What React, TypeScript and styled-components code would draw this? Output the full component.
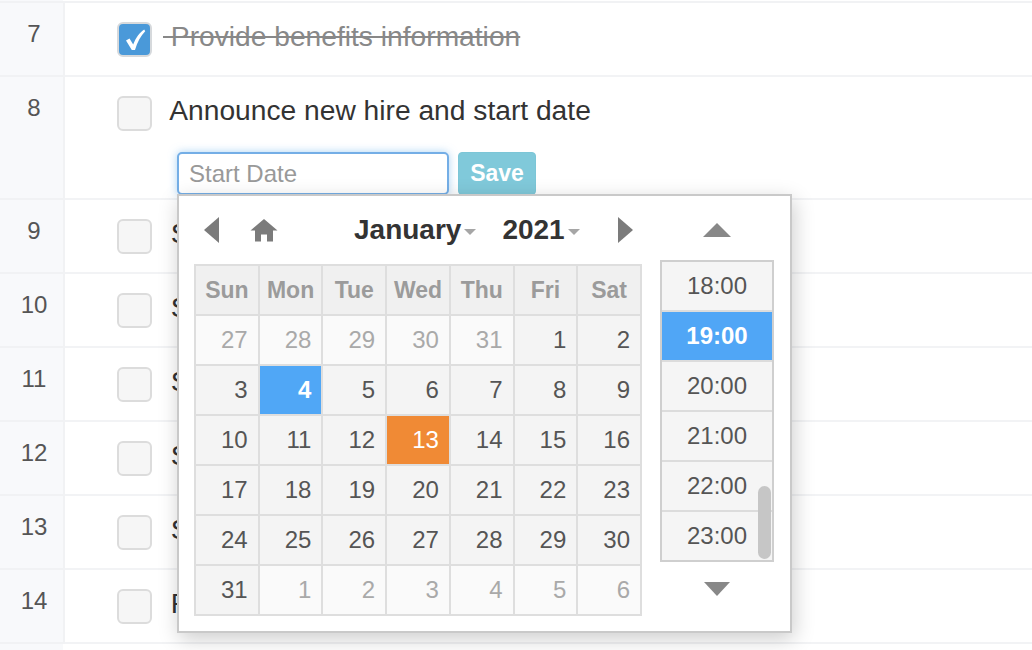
import React from 'react';
import styled, { createGlobalStyle, css } from 'styled-components';

const GlobalStyle = createGlobalStyle`
  html, body { margin: 0; padding: 0; background: #fff; }
  body { font-family: "Liberation Sans", Arial, Helvetica, sans-serif; overflow: hidden; }
  * { box-sizing: border-box; }
`;

const Page = styled.div`
  width: 1032px;
  height: 650px;
  overflow: hidden;
  padding-top: 1px;
  background: linear-gradient(to right, #f8f9fb 0, #f8f9fb 63px, #fff 63px);
`;

const Table = styled.div`
  display: flex;
  flex-direction: column;
  border-top: 2px solid #f1f2f4;
`;

const Row = styled.div`
  display: flex;
`;

const NumCell = styled.div`
  width: 65px;
  flex: none;
  background: #f8f9fb;
  border-right: 2px solid #f1f2f4;
  border-bottom: 2px solid #f1f2f4;
  padding: 14px 0 0 5px;
  text-align: center;
  font-size: 24px;
  line-height: 34px;
  color: #555;
`;

const ContentCell = styled.div<{ $pb: number }>`
  flex: 1;
  background: #fff;
  border-bottom: 2px solid #f2f3f5;
  padding: 16px 0 ${(p) => p.$pb}px 52px;
  display: flex;
  flex-direction: column;
`;

const TaskLine = styled.div`
  display: flex;
  align-items: flex-start;
`;

const Checkbox = styled.div<{ $checked?: boolean }>`
  width: 35px;
  height: 35px;
  flex: none;
  margin-top: 3px;
  border-radius: 6px;
  border: 2px solid #dcdcdc;
  background: #f6f6f6;
  display: flex;
  align-items: center;
  justify-content: center;
  ${(p) =>
    p.$checked &&
    css`
      background: #4a99d9;
      border-color: #d6d9dc;
    `}
`;

const Label = styled.span<{ $done?: boolean }>`
  margin-left: 11px;
  font-size: 28.2px;
  line-height: 34px;
  color: #333;
  white-space: pre;
  ${(p) =>
    p.$done &&
    css`
      color: #888;
      text-decoration: line-through;
    `}
`;

const DateEditor = styled.div`
  position: relative;
  display: flex;
  gap: 9px;
  margin: 21px 0 0 60px;
`;

const DateInput = styled.input`
  width: 272px;
  height: 43px;
  border: 2px solid #74aee6;
  border-radius: 5px;
  box-shadow: 0 0 8px rgba(102, 175, 233, 0.55);
  padding: 0 10px;
  font-family: inherit;
  font-size: 24px;
  color: #555;
  outline: none;
  background: #fff;
  &::placeholder { color: #999; }
`;

const SaveButton = styled.button`
  width: 78px;
  height: 43px;
  border: 1px solid #7cc6d7;
  border-radius: 4px;
  background: #80c9da;
  color: #fff;
  font-family: inherit;
  font-weight: bold;
  font-size: 23px;
  padding: 0;
`;

const Popup = styled.div`
  position: absolute;
  left: 0;
  top: 42px;
  width: 615px;
  z-index: 10;
  background: #fff;
  border: 2px solid #c9c9c9;
  box-shadow: 2px 6px 20px rgba(0, 0, 0, 0.2);
  padding: 10px 16px 15px 15px;
  display: flex;
  gap: 18px;
`;

const CalColumn = styled.div`
  width: 448px;
  display: flex;
  flex-direction: column;
  gap: 10px;
`;

const CalHeader = styled.div`
  height: 48px;
  display: flex;
  align-items: center;
`;

const NavIcon = styled.svg<{ $ml: number; $auto?: boolean }>`
  flex: none;
  display: block;
  margin-left: ${(p) => (p.$auto ? 'auto' : `${p.$ml}px`)};
  ${(p) => p.$auto && css`margin-right: 9px;`}
`;

const Select = styled.div<{ $ml: number }>`
  margin-left: ${(p) => p.$ml}px;
  display: flex;
  align-items: center;
  gap: 3px;
  font-weight: bold;
  font-size: 28px;
  color: #333;
`;

const Caret = styled.svg`
  display: block;
  margin-top: 4px;
`;

const Grid = styled.div`
  display: grid;
  grid-template-columns: repeat(7, 1fr);
  grid-auto-rows: 48px;
  gap: 2px;
  padding: 2px;
  background: #dedede;
`;

const HeadCell = styled.div`
  background: #f0f0f0;
  color: #9b9b9b;
  font-weight: bold;
  font-size: 23px;
  display: flex;
  align-items: center;
  justify-content: center;
`;

type DayKind = 'other' | 'cur' | 'selected' | 'today';

const DayCell = styled.div<{ $kind: DayKind }>`
  display: flex;
  align-items: center;
  justify-content: flex-end;
  padding-right: 10px;
  font-size: 24px;
  background: #f4f4f4;
  color: #555;
  ${(p) =>
    p.$kind === 'other' &&
    css`
      background: #fafafa;
      color: #a9a9a9;
    `}
  ${(p) =>
    p.$kind === 'selected' &&
    css`
      background: #50a7f6;
      color: #fff;
      font-weight: bold;
    `}
  ${(p) =>
    p.$kind === 'today' &&
    css`
      background: #f08a35;
      color: #fff;
    `}
`;

const TimeColumn = styled.div`
  width: 114px;
  display: flex;
  flex-direction: column;
`;

const TimeArrow = styled.div`
  height: 48px;
  display: flex;
  align-items: center;
  justify-content: center;
`;

const TimeFooter = styled.div`
  flex: 1;
  display: flex;
  align-items: center;
  justify-content: center;
`;

const TimeList = styled.div`
  position: relative;
  margin-top: 6px;
  height: 302px;
  border: 2px solid #cfcfcf;
  overflow: hidden;
  background: #f5f5f5;
`;

const TimeItem = styled.div<{ $selected?: boolean }>`
  height: 50px;
  border-bottom: 2px solid #dcdcdc;
  background: #f5f5f5;
  display: flex;
  align-items: center;
  justify-content: center;
  font-size: 24px;
  color: #555;
  &:last-of-type { border-bottom: none; height: 48px; }
  ${(p) =>
    p.$selected &&
    css`
      background: #50a6f6;
      color: #fff;
      font-weight: bold;
    `}
`;

const ScrollThumb = styled.div`
  position: absolute;
  right: 1px;
  top: 224px;
  width: 13px;
  height: 73px;
  border-radius: 7px;
  background: #c6c6c6;
`;

const Filler = styled.div`
  height: 20px;
`;

const CheckMark = () => (
  <svg width="31" height="31" viewBox="0 0 31 31">
    <path
      d="M7 16.5 L10.5 14.6 L14.2 20.5 C17 13.5 20.5 9 25.2 5.6 L26.2 7.2 C21.8 11.6 18.4 18 16 26 L12.8 26 Z"
      fill="#fff"
    />
  </svg>
);

const SmallCaret = () => (
  <Caret width="12" height="7" viewBox="0 0 12 7">
    <path d="M0 0 L12 0 L6 6 Z" fill="#a6a6a6" />
  </Caret>
);

const rows: { n: number; text: string; done?: boolean; editing?: boolean }[] = [
  { n: 7, text: 'Provide benefits information', done: true },
  { n: 8, text: 'Announce new hire and start date', editing: true },
  { n: 9, text: 'Set up workstation and equipment' },
  { n: 10, text: 'Set up email and system accounts' },
  { n: 11, text: 'Schedule orientation session' },
  { n: 12, text: 'Send welcome packet' },
  { n: 13, text: 'Schedule first-week meetings' },
  { n: 14, text: 'Plan first-day agenda' },
];

const weekdays = ['Sun', 'Mon', 'Tue', 'Wed', 'Thu', 'Fri', 'Sat'];

const days: { d: number; kind: DayKind }[] = (() => {
  const out: { d: number; kind: DayKind }[] = [];
  [27, 28, 29, 30, 31].forEach((d) => out.push({ d, kind: 'other' }));
  for (let d = 1; d <= 31; d++) {
    out.push({ d, kind: d === 4 ? 'selected' : d === 13 ? 'today' : 'cur' });
  }
  [1, 2, 3, 4, 5, 6].forEach((d) => out.push({ d, kind: 'other' }));
  return out;
})();

const times = ['18:00', '19:00', '20:00', '21:00', '22:00', '23:00'];

const DatePickerPopup = () => (
  <Popup>
    <CalColumn>
      <CalHeader>
        <NavIcon $ml={10} width="15" height="26" viewBox="0 0 15 26">
          <path d="M15 0 L15 26 L0 13 Z" fill="#7b7b7b" />
        </NavIcon>
        <NavIcon $ml={31} width="28" height="24" viewBox="0 0 28 24">
          <path
            d="M14 1 L27.5 12.5 L23 12.5 L23 23.5 L17 23.5 L17 16.5 L11 16.5 L11 23.5 L5 23.5 L5 12.5 L0.5 12.5 Z"
            fill="#7b7b7b"
          />
        </NavIcon>
        <Select $ml={76}>
          January
          <SmallCaret />
        </Select>
        <Select $ml={26}>
          2021
          <SmallCaret />
        </Select>
        <NavIcon $ml={0} $auto width="15" height="26" viewBox="0 0 15 26">
          <path d="M0 0 L0 26 L15 13 Z" fill="#7b7b7b" />
        </NavIcon>
      </CalHeader>
      <Grid>
        {weekdays.map((w) => (
          <HeadCell key={w}>{w}</HeadCell>
        ))}
        {days.map((c, i) => (
          <DayCell key={i} $kind={c.kind}>
            {c.d}
          </DayCell>
        ))}
      </Grid>
    </CalColumn>
    <TimeColumn>
      <TimeArrow>
        <svg width="28" height="14" viewBox="0 0 28 14">
          <path d="M0 14 L14 0 L28 14 Z" fill="#888" />
        </svg>
      </TimeArrow>
      <TimeList>
        {times.map((t) => (
          <TimeItem key={t} $selected={t === '19:00'}>
            {t}
          </TimeItem>
        ))}
        <ScrollThumb />
      </TimeList>
      <TimeFooter>
        <svg width="26" height="14" viewBox="0 0 26 14">
          <path d="M0 0 L26 0 L13 14 Z" fill="#888" />
        </svg>
      </TimeFooter>
    </TimeColumn>
  </Popup>
);

export default function App() {
  return (
    <>
      <GlobalStyle />
      <Page>
        <Table>
          {rows.map((r) => (
            <Row key={r.n}>
              <NumCell>{r.n}</NumCell>
              <ContentCell $pb={r.editing ? 3 : 18}>
                <TaskLine>
                  <Checkbox $checked={r.done}>{r.done && <CheckMark />}</Checkbox>
                  <Label $done={r.done}>{' ' + r.text}</Label>
                </TaskLine>
                {r.editing && (
                  <DateEditor>
                    <DateInput placeholder="Start Date" readOnly />
                    <SaveButton>Save</SaveButton>
                    <DatePickerPopup />
                  </DateEditor>
                )}
              </ContentCell>
            </Row>
          ))}
          <Filler />
        </Table>
      </Page>
    </>
  );
}
